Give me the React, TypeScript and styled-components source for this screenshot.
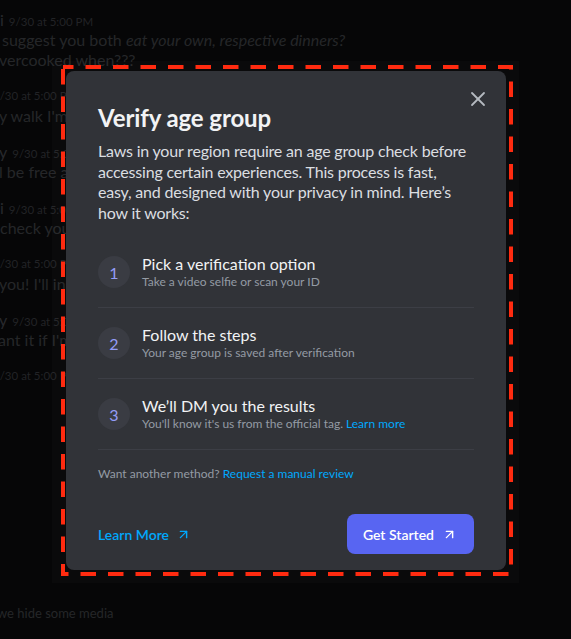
import React from "react";
import styled, { createGlobalStyle } from "styled-components";
import { ArrowUpRight, X } from "lucide-react";

const GlobalStyle = createGlobalStyle`
  html, body { margin: 0; padding: 0; background: #060607; }
  body { font-family: "Lato", "Noto Sans", sans-serif; overflow: hidden; }
  * { box-sizing: border-box; }
`;

const Page = styled.div`
  position: relative;
  width: 571px;
  height: 639px;
  overflow: hidden;
  background: #060607;
`;

const ChatLog = styled.div`
  display: flex;
  flex-direction: column;
  gap: 16px;
  padding-top: 10px;
  color: #252629;
  font-size: 16px;
  line-height: 20px;
  white-space: nowrap;
`;

const Message = styled.div`
  display: flex;
  flex-direction: column;
`;

const Header = styled.div<{ $shift: number }>`
  display: flex;
  align-items: baseline;
  gap: 5px;
  margin-left: ${(p) => p.$shift}px;
  height: 20px;
`;

const Name = styled.span`
  font-size: 16px;
  color: #28292d;
`;

const Time = styled.span`
  font-size: 11.5px;
  color: #222326;
`;

const Line = styled.div<{ $shift: number }>`
  margin-left: ${(p) => p.$shift}px;
  height: 20px;
`;

const Notice = styled.div`
  position: absolute;
  left: -3px;
  top: 605px;
  font-size: 13px;
  color: #252629;
`;

const Backdrop = styled.div`
  position: absolute;
  inset: 0;
  display: flex;
  justify-content: center;
  align-items: flex-start;
  padding-top: 61px;
`;

const Halo = styled.div`
  position: relative;
  padding: 10px 13px 13px 14px;
  background: rgba(255, 255, 255, 0.018);
`;

const Frame = styled.svg`
  position: absolute;
  left: 9px;
  top: 4px;
  pointer-events: none;
`;

const Modal = styled.div`
  position: relative;
  width: 440px;
  background: #313338;
  border-radius: 8px;
  padding: 32px 32px 16px;
  display: flex;
  flex-direction: column;
  color: #dbdee1;
`;

const CloseButton = styled.button`
  position: absolute;
  top: 16px;
  right: 16px;
  width: 24px;
  height: 24px;
  padding: 0;
  border: 0;
  background: transparent;
  color: #b5bac1;
  display: flex;
  align-items: center;
  justify-content: center;
`;

const Title = styled.h1`
  margin: 0;
  font-size: 24px;
  line-height: 30px;
  font-weight: 700;
  color: #f2f3f5;
  letter-spacing: -0.1px;
`;

const Intro = styled.p`
  margin: 8px 0 0;
  max-width: 372px;
  font-size: 16px;
  line-height: 20.5px;
  letter-spacing: -0.2px;
  color: #dbdee1;
`;

const Steps = styled.ol`
  list-style: none;
  margin: 14px 0 0;
  padding: 0;
  display: flex;
  flex-direction: column;
`;

const Step = styled.li`
  display: flex;
  align-items: center;
  gap: 12px;
  padding: 17px 0;
  border-bottom: 1px solid #3c3e45;
`;

const StepNumber = styled.div`
  width: 32px;
  height: 32px;
  border-radius: 50%;
  background: #3a3c43;
  color: #949cf7;
  font-size: 16px;
  display: flex;
  align-items: center;
  justify-content: center;
  flex-shrink: 0;
`;

const StepText = styled.div`
  display: flex;
  flex-direction: column;
`;

const StepTitle = styled.div`
  font-size: 16px;
  line-height: 20px;
  font-weight: 400;
  color: #f2f3f5;
`;

const StepSub = styled.div`
  font-size: 12px;
  line-height: 16px;
  color: #949ba4;
`;

const Link = styled.a`
  color: #00a8fc;
  text-decoration: none;
`;

const Alt = styled.div`
  margin-top: 16px;
  font-size: 12px;
  line-height: 16px;
  color: #949ba4;
`;

const Footer = styled.div`
  margin-top: 32px;
  display: flex;
  align-items: center;
  justify-content: space-between;
`;

const FooterLink = styled.a`
  display: flex;
  align-items: center;
  gap: 7px;
  font-size: 14px;
  font-weight: 600;
  color: #00a8fc;
  text-decoration: none;
`;

const PrimaryButton = styled.button`
  height: 40px;
  padding: 0 17px 0 16px;
  border: 0;
  border-radius: 8px;
  background: #5865f2;
  color: #ffffff;
  font-family: inherit;
  font-size: 14px;
  font-weight: 600;
  display: flex;
  align-items: center;
  gap: 8px;
`;

const messages = [
  { h: "i", hs: 0, lines: [{ s: 2, t: <>suggest you both <i>eat your own, respective dinners?</i></> }, { s: -1, t: "vercooked when???" }] },
  { h: "", hs: -7, lines: [{ s: -1, t: "y walk I'm heading out now" }] },
  { h: "y", hs: -1, lines: [{ s: -1, t: "l be free after that" }] },
  { h: "i", hs: 0, lines: [{ s: 0, t: "check your messages" }] },
  { h: "", hs: -7, lines: [{ s: -1, t: "you! I'll insist on it" }] },
  { h: "y", hs: -1, lines: [{ s: -2, t: "ant it if I'm late" }] },
  { h: "", hs: -7, lines: [] },
];

const steps = [
  { n: 1, title: "Pick a verification option", sub: <>Take a video selfie or scan your ID</> },
  { n: 2, title: "Follow the steps", sub: <>Your age group is saved after verification</> },
  {
    n: 3,
    title: "We’ll DM you the results",
    sub: (
      <>
        You'll know it's us from the official tag. <Link href="#">Learn more</Link>
      </>
    ),
  },
];

export default function App() {
  return (
    <Page>
      <GlobalStyle />
      <ChatLog>
        {messages.map((m, i) => (
          <Message key={i}>
            <Header $shift={m.hs}>
              {m.h && <Name>{m.h}</Name>}
              <Time>9/30 at 5:00 PM</Time>
            </Header>
            {m.lines.map((l, j) => (
              <Line key={j} $shift={l.s}>
                {l.t}
              </Line>
            ))}
          </Message>
        ))}
      </ChatLog>
      <Notice>we hide some media</Notice>
      <Backdrop>
        <Halo>
          <Frame width="452" height="511" viewBox="0 0 452 511">
            <rect
              x="2"
              y="2"
              width="448"
              height="507"
              fill="none"
              stroke="#ff2b10"
              strokeWidth="4"
              strokeDasharray="15.5 12"
              strokeDashoffset="5"
            />
          </Frame>
          <Modal>
            <CloseButton aria-label="Close">
              <X size={28} strokeWidth={1.8} />
            </CloseButton>
            <Title>Verify age group</Title>
            <Intro>
              Laws in your region require an age group check before accessing certain experiences. This process is
              fast, easy, and designed with your privacy in mind. Here’s how it works:
            </Intro>
            <Steps>
              {steps.map((s) => (
                <Step key={s.n}>
                  <StepNumber>{s.n}</StepNumber>
                  <StepText>
                    <StepTitle>{s.title}</StepTitle>
                    <StepSub>{s.sub}</StepSub>
                  </StepText>
                </Step>
              ))}
            </Steps>
            <Alt>
              Want another method? <Link href="#">Request a manual review</Link>
            </Alt>
            <Footer>
              <FooterLink href="#">
                Learn More
                <ArrowUpRight size={15} strokeWidth={2.25} />
              </FooterLink>
              <PrimaryButton>
                Get Started
                <ArrowUpRight size={15} strokeWidth={2.25} />
              </PrimaryButton>
            </Footer>
          </Modal>
        </Halo>
      </Backdrop>
    </Page>
  );
}
